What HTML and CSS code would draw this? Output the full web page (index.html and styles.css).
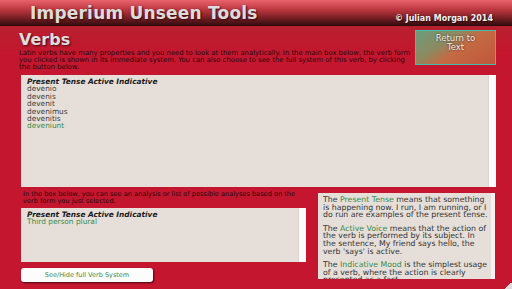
FILE: index.html
```html
<!DOCTYPE html>
<html lang="en">
<head>
    <meta charset="UTF-8">
    <title>Imperium Unseen Tools - Verbs</title>
    <link rel="stylesheet" href="styles.css">
</head>
<body>
    <div class="header">
        <h1>Imperium Unseen Tools</h1>
        <span class="copy">&copy; Julian Morgan 2014</span>
    </div>
    <div class="page">
        <div class="intro">
            <div class="intro-text">
                <h2>Verbs</h2>
                <p>Latin verbs have many properties and you need to look at them analytically. In the main box below, the verb form you clicked is shown in its immediate system. You can also choose to see the full system of this verb, by clicking the button below.</p>
            </div>
            <button class="return-btn">Return to<br>Text</button>
        </div>
        <div class="main-box">
            <div class="box-inner">
                <div class="box-title">Present Tense Active Indicative</div>
                <div>devenio</div>
                <div>devenis</div>
                <div>devenit</div>
                <div>devenimus</div>
                <div>devenitis</div>
                <div class="green">deveniunt</div>
            </div>
            <div class="strip"></div>
        </div>
        <div class="lower">
            <div class="lower-left">
                <p class="note">In the box below, you can see an analysis or list of possible analyses based on the verb form you just selected.</p>
                <div class="analysis">
                    <div class="box-inner">
                        <div class="box-title">Present Tense Active Indicative</div>
                        <div class="green">Third person plural</div>
                    </div>
                    <div class="strip"></div>
                </div>
                <button class="system-btn">See/Hide full Verb System</button>
            </div>
            <div class="info">
                <div class="info-text">
                    <p>The <span class="green">Present Tense</span> means that something is happening now. I run, I am running, or I do run are examples of the present tense.</p>
                    <p>The <span class="green">Active Voice</span> means that the action of the verb is performed by its subject. In the sentence, My friend says hello, the verb 'says' is active.</p>
                    <p>The <span class="green">Indicative Mood</span> is the simplest usage of a verb, where the action is clearly presented as a fact.</p>
                </div>
                <div class="scrollbar"><div class="thumb"></div></div>
            </div>
        </div>
    </div>
    <div class="grip"></div>
</body>
</html>
```

FILE: styles.css
```css
body {
    margin: 0;
    width: 512px;
    height: 289px;
    overflow: hidden;
    background-color: #c4162f;
    font-family: 'DejaVu Sans', Verdana, sans-serif;
    position: relative;
}
.header {
    height: 26px;
    display: flex;
    justify-content: space-between;
    align-items: center;
    padding: 0 19px 0 30px;
    background: linear-gradient(to bottom, #e8636b 0%, #b8343d 40%, #6a1b20 75%, #2c0b0c 100%);
}
.header h1 {
    margin: 0;
    font-size: 17px;
    font-weight: bold;
    color: #dcdcdc;
    text-shadow: 1px 1px 2px #3a0a0a;
    letter-spacing: 0.2px;
}
.copy {
    font-size: 8px;
    font-weight: bold;
    color: #f2f2f2;
    margin-top: 10px;
    text-shadow: 1px 1px 1px #2a0606;
}
.page {
    padding: 0 16px 0 21px;
    background: linear-gradient(to bottom, #b8202e 0px, #c4162f 30px);
}
.intro {
    display: flex;
    justify-content: space-between;
    align-items: flex-start;
}
.intro-text {
    width: 396px;
    margin-left: -2px;
}
.intro h2 {
    margin: 0;
    padding-top: 4px;
    height: 20px;
    font-size: 16px;
    font-weight: bold;
    color: #dedede;
    text-shadow: 1px 1px 2px #4a0a10;
}
.intro p {
    margin: 0;
    font-size: 6.85px;
    line-height: 7px;
    color: #2a0808;
}
.return-btn {
    margin-top: 4px;
    width: 81px;
    height: 35px;
    padding: 0 0 9px 0;
    border: 1px solid #3fc0a8;
    background: linear-gradient(145deg, #6c9c7c 0%, #8c8a60 35%, #c46a44 55%, #c0563a 100%);
    color: #f4f0ee;
    font-family: 'DejaVu Sans', Verdana, sans-serif;
    font-size: 8.5px;
    line-height: 9px;
    text-shadow: 0 0 2px #2a1a10;
}
.main-box {
    margin-top: 4px;
    height: 112px;
    width: 475px;
    display: flex;
    background-color: #e6dfd9;
}
.box-inner {
    flex-grow: 1;
    padding: 3px 6px;
    font-size: 7.4px;
    line-height: 7.4px;
    color: #3a3a3a;
}
.box-title {
    font-weight: bold;
    font-style: italic;
    color: #1a1a1a;
}
.strip {
    width: 7px;
    background-color: #fafafa;
    border-left: 1px solid #dcd6d0;
}
.green {
    color: #3a8a45;
}
.lower {
    display: flex;
    margin-top: 4px;
}
.lower-left {
    width: 285px;
}
.note {
    margin: 0 0 0 2px;
    font-size: 6.6px;
    line-height: 6.7px;
    color: #2a0808;
    height: 17px;
}
.analysis {
    display: flex;
    height: 54px;
    background-color: #e6dfd9;
}
.system-btn {
    margin-top: 4px;
    width: 132px;
    height: 14px;
    padding: 0;
    border: none;
    border-radius: 3px;
    background-color: #fcfcfc;
    box-shadow: 1px 1px 2px #4a0a10;
    color: #3a8a45;
    font-family: 'DejaVu Sans', Verdana, sans-serif;
    font-size: 6.5px;
}
.info {
    margin-left: 12px;
    margin-top: 2px;
    width: 177px;
    height: 86px;
    display: flex;
    background-color: #e6dfd9;
    overflow: hidden;
}
.info-text {
    flex-grow: 1;
    padding: 3px 2px 0 5px;
    font-size: 7.8px;
    line-height: 7.6px;
    color: #333;
}
.info-text p {
    margin: 0 0 6px 0;
}
.scrollbar {
    width: 6px;
    background-color: #f4f2f0;
}
.thumb {
    margin: 1px 2px 0 2px;
    height: 66px;
    background-color: #b8b4b0;
}
.grip {
    position: absolute;
    right: 0;
    bottom: 0;
    width: 7px;
    height: 6px;
    background: linear-gradient(135deg, transparent 45%, #ddd 45%);
}
```
